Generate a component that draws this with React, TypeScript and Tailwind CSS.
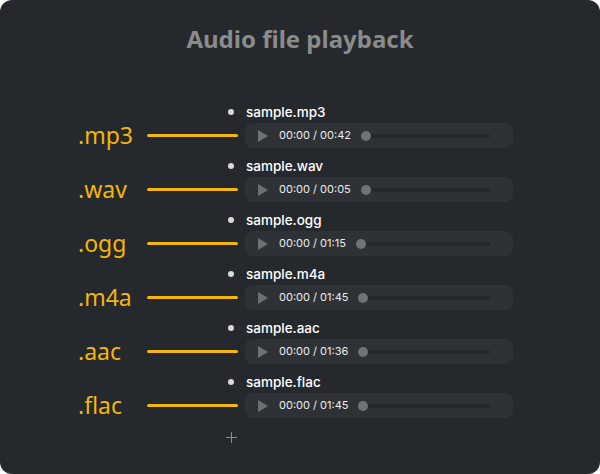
import React from 'react';

const files = [
  { ext: '.mp3', name: 'sample.mp3', duration: '00:42' },
  { ext: '.wav', name: 'sample.wav', duration: '00:05' },
  { ext: '.ogg', name: 'sample.ogg', duration: '01:15' },
  { ext: '.m4a', name: 'sample.m4a', duration: '01:45' },
  { ext: '.aac', name: 'sample.aac', duration: '01:36' },
  { ext: '.flac', name: 'sample.flac', duration: '01:45' },
];

const Player: React.FC<{ duration: string }> = ({ duration }) => (
  <div className="flex items-center h-[25px] w-[268px] rounded-lg bg-[#2e3236] pl-[13px] pr-[23px]">
    <svg width="10" height="12" viewBox="0 0 10 12" className="shrink-0">
      <path d="M0 0 L10 6 L0 12 Z" fill="#6c6f73" />
    </svg>
    <span className="ml-[11px] text-[11px] text-[#ececec] whitespace-nowrap [font-family:Inter,sans-serif]">
      00:00 / {duration}
    </span>
    <div className="relative ml-[10px] flex-1 flex items-center h-[10px]">
      <div className="ml-[5px] h-[4px] w-full rounded-full bg-[#24272b]" />
      <div className="absolute left-0 top-0 w-[10px] h-[10px] rounded-full bg-[#6f7276]" />
    </div>
  </div>
);

export default function App() {
  return (
    <div className="bg-white w-[600px] h-[474px]">
      <div className="w-[600px] h-[474px] rounded-[12px] bg-[#25292e] pt-[24px]">
        <h1 className="text-center text-[24px] leading-[30px] font-bold text-[#8b8b8b] [font-family:'Noto_Sans',sans-serif]">
          Audio file playback
        </h1>
        <div className="mt-[49px] flex flex-col">
          {files.map((f) => (
            <div key={f.ext} className="flex h-[54px]">
              <div className="flex items-center pl-[78px] w-[238px] h-[45px] pt-[19px]">
                <span className="w-[69px] text-[23px] leading-[26px] font-normal text-[#f4b609] [font-family:'Noto_Sans',sans-serif]">
                  {f.ext}
                </span>
                <div className="w-[91px] h-[3px] rounded-full bg-[#f4b609]" />
              </div>
              <div className="flex flex-col pl-[7px]">
                <div className="flex items-center -ml-[17px] h-[18px]">
                  <span className="w-[6px] h-[6px] rounded-full bg-[#d9d9d9]" />
                  <span className="ml-[12px] text-[13.5px] font-medium text-white [font-family:Inter,sans-serif]">
                    {f.name}
                  </span>
                </div>
                <div className="mt-[2px]">
                  <Player duration={f.duration} />
                </div>
              </div>
            </div>
          ))}
          <div className="pl-[226px] mt-[5px]">
            <svg width="11" height="11" viewBox="0 0 11 11">
              <path d="M5.5 0 V11 M0 5.5 H11" stroke="#8a8d90" strokeWidth="1" />
            </svg>
          </div>
        </div>
      </div>
    </div>
  );
}
